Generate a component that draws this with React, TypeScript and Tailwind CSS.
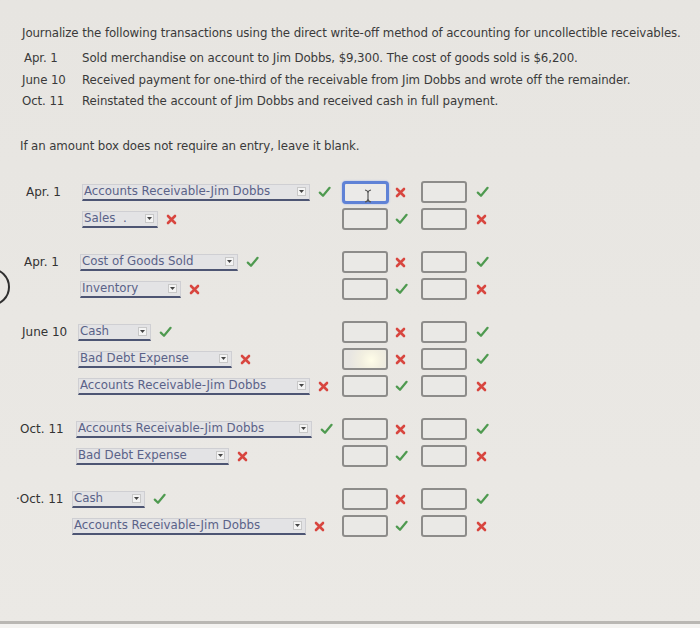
import React from 'react';

type Mark = 'check' | 'x';

type Row = {
  label: string;
  w: string;
  mark: Mark;
  b1: Mark;
  b2: Mark;
  focus?: boolean;
  glare?: boolean;
};

type Entry = { date: string; pl: string; rows: Row[] };

const ENTRIES: Entry[] = [
  {
    date: 'Apr. 1',
    pl: 'pl-[10px]',
    rows: [
      { label: 'Accounts Receivable-Jim Dobbs', w: 'w-[228px]', mark: 'check', b1: 'x', b2: 'check', focus: true },
      { label: 'Sales  .', w: 'w-[76px]', mark: 'x', b1: 'check', b2: 'x' },
    ],
  },
  {
    date: 'Apr. 1',
    pl: 'pl-[8px]',
    rows: [
      { label: 'Cost of Goods Sold', w: 'w-[158px]', mark: 'check', b1: 'x', b2: 'check' },
      { label: 'Inventory', w: 'w-[101px]', mark: 'x', b1: 'check', b2: 'x' },
    ],
  },
  {
    date: 'June 10',
    pl: 'pl-[6px]',
    rows: [
      { label: 'Cash', w: 'w-[73px]', mark: 'check', b1: 'x', b2: 'check' },
      { label: 'Bad Debt Expense', w: 'w-[154px]', mark: 'x', b1: 'x', b2: 'check', glare: true },
      { label: 'Accounts Receivable-Jim Dobbs', w: 'w-[232px]', mark: 'x', b1: 'check', b2: 'x' },
    ],
  },
  {
    date: 'Oct. 11',
    pl: 'pl-[4px]',
    rows: [
      { label: 'Accounts Receivable-Jim Dobbs', w: 'w-[236px]', mark: 'check', b1: 'x', b2: 'check' },
      { label: 'Bad Debt Expense', w: 'w-[153px]', mark: 'x', b1: 'check', b2: 'x' },
    ],
  },
  {
    date: '·Oct. 11',
    pl: 'pl-0',
    rows: [
      { label: 'Cash', w: 'w-[73px]', mark: 'check', b1: 'x', b2: 'check' },
      { label: 'Accounts Receivable-Jim Dobbs', w: 'w-[234px]', mark: 'x', b1: 'check', b2: 'x' },
    ],
  },
];

function Check() {
  return (
    <svg width="13" height="12" viewBox="0 0 13 12">
      <path d="M1.8 6.6 L5 9.8 L11.6 1.8" stroke="#4f9a50" strokeWidth="2.2" fill="none" strokeLinecap="round" strokeLinejoin="round" />
    </svg>
  );
}

function Cross() {
  return (
    <svg width="11" height="11" viewBox="0 0 11 11">
      <path d="M2 2 L9 9 M9 2 L2 9" stroke="#d8463f" strokeWidth="2.6" strokeLinecap="round" />
    </svg>
  );
}

function MarkIcon({ m }: { m: Mark }) {
  return m === 'check' ? <Check /> : <Cross />;
}

function Select({ label, w }: { label: string; w: string }) {
  return (
    <div className={`${w} h-[17px] flex items-center justify-between bg-[#e3e3e5] border border-[#cfcfd3] border-b-2 border-b-[#4d5573] pl-[1px] pr-[3px]`}>
      <span className="text-[11.8px] leading-none text-[#5a6288] whitespace-pre">{label}</span>
      <span className="w-[9px] h-[9px] bg-[#f4f4f4] border border-[#c8c8c8] flex items-center justify-center">
        <svg width="5" height="3" viewBox="0 0 5 3">
          <path d="M0 0 L5 0 L2.5 3 Z" fill="#444" />
        </svg>
      </span>
    </div>
  );
}

function Box({ focus, glare }: { focus?: boolean; glare?: boolean }) {
  if (focus) {
    return (
      <div className="relative w-[47px] h-[23px] rounded-[4px] border-[3px] border-[#5f82d6] bg-[#ebeae8] shadow-[0_0_2px_#9db3ea]">
        <svg className="absolute left-[19px] top-[5px]" width="8" height="14" viewBox="0 0 8 14">
          <path d="M1 1 Q4 1.5 4 4 L4 10 Q4 12.5 1 13 M7 1 Q4 1.5 4 4 M4 10 Q4 12.5 7 13" stroke="#555" strokeWidth="1.2" fill="none" />
        </svg>
      </div>
    );
  }
  return (
    <div
      className={`w-[46px] h-[22px] rounded-[3px] border-2 border-[#8d8c8a] ${
        glare ? 'bg-[radial-gradient(circle_at_65%_55%,#fffde8_0%,#f2efe0_35%,#e8e6e2_75%)]' : 'bg-[#eae9e6]'
      }`}
    />
  );
}

function JournalRow({ date, row, pl }: { date?: string; row: Row; pl: string }) {
  return (
    <div className="grid grid-cols-[326px_46px_33px_46px_40px] h-[27px] items-center">
      <div className={`flex items-center ${pl}`}>
        <span className="w-[56px] shrink-0 text-[12px] text-[#333]">{date ?? ''}</span>
        <Select label={row.label} w={row.w} />
        <span className="ml-[8px] flex items-center">
          <MarkIcon m={row.mark} />
        </span>
      </div>
      <Box focus={row.focus} glare={row.glare} />
      <span className="pl-[7px] flex items-center">
        <MarkIcon m={row.b1} />
      </span>
      <Box />
      <span className="pl-[9px] flex items-center">
        <MarkIcon m={row.b2} />
      </span>
    </div>
  );
}

export default function App() {
  return (
    <div
      className="relative w-[700px] h-[628px] overflow-hidden bg-gradient-to-b from-[#e7e5e1] to-[#ebe9e5] text-[#3a3a3a]"
      style={{ fontFamily: '"DejaVu Sans", Verdana, sans-serif' }}
    >
      {/* stray circle at the left edge of the photo */}
      <div className="absolute left-[-28px] top-[268px] w-[38px] h-[38px] rounded-full border-2 border-[#2f2f2f]" />

      <div className="pt-[25px] pl-[22px]">
        <p className="text-[11.8px] leading-[16px] tracking-[-0.1px]">
          Journalize the following transactions using the direct write-off method of accounting for uncollectible receivables.
        </p>

        <div className="mt-[7px] text-[11.8px] leading-[21.5px] tracking-[-0.1px]">
          <div className="flex">
            <span className="w-[60px] pl-[2px]">Apr. 1</span>
            <span>Sold merchandise on account to Jim Dobbs, $9,300. The cost of goods sold is $6,200.</span>
          </div>
          <div className="flex">
            <span className="w-[60px]">June 10</span>
            <span>Received payment for one-third of the receivable from Jim Dobbs and wrote off the remainder.</span>
          </div>
          <div className="flex">
            <span className="w-[60px]">Oct. 11</span>
            <span>Reinstated the account of Jim Dobbs and received cash in full payment.</span>
          </div>
        </div>

        <p className="mt-[25px] -ml-[2px] text-[11.8px] leading-[16px] tracking-[-0.1px]">
          If an amount box does not require an entry, leave it blank.
        </p>
      </div>

      <div className="mt-[25px] pl-[16px] flex flex-col gap-[16px]">
        {ENTRIES.map((e, i) => (
          <div key={i}>
            {e.rows.map((r, j) => (
              <JournalRow key={j} date={j === 0 ? e.date : undefined} row={r} pl={e.pl} />
            ))}
          </div>
        ))}
      </div>

      <div className="absolute left-0 right-0 top-[621px] h-[3px] bg-[#b9b7b3]" />
      <div className="absolute left-0 right-0 top-[624px] bottom-0 bg-[#f4f3f1]" />
    </div>
  );
}
